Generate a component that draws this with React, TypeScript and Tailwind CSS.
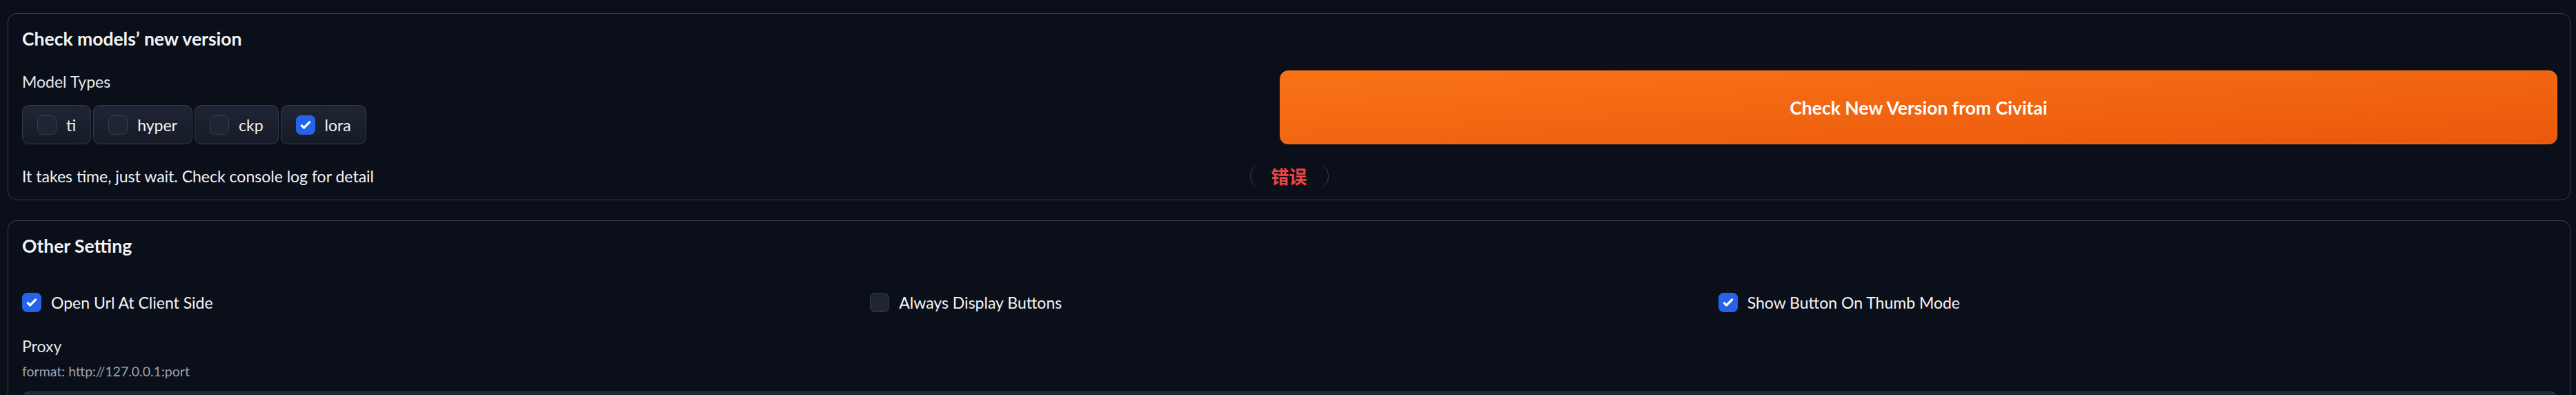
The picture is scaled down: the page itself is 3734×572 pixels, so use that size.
import React from "react";

const CheckMark = () => (
  <svg viewBox="0 0 16 16" className="w-full h-full" fill="white">
    <path d="M12.207 4.793a1 1 0 010 1.414l-5 5a1 1 0 01-1.414 0l-2-2a1 1 0 011.414-1.414L6.5 9.086l4.293-4.293a1 1 0 011.414 0z" />
  </svg>
);

const Box = ({ checked }: { checked: boolean }) =>
  checked ? (
    <span className="w-[28px] h-[28px] rounded-[7px] bg-[#2563eb] border border-[#2563eb] shrink-0">
      <CheckMark />
    </span>
  ) : (
    <span className="w-[28px] h-[28px] rounded-[7px] bg-[#1f2533] border border-[#353c4b] shrink-0" />
  );

const Chip = ({ label, checked }: { label: string; checked: boolean }) => (
  <label className="flex items-center gap-[14px] h-[57px] pl-[21px] pr-[21px] rounded-[10px] border border-[#343b4b] bg-gradient-to-t from-[#161b27] to-[#1f2534]">
    <Box checked={checked} />
    <span className="text-[#f3f4f6]">{label}</span>
  </label>
);

const Option = ({ label, checked }: { label: string; checked: boolean }) => (
  <label className="flex items-center gap-[14px] h-[30px]">
    <Box checked={checked} />
    <span className="text-[#f3f4f6]">{label}</span>
  </label>
);

const Title = ({ children }: { children: React.ReactNode }) => (
  <h3 className="text-[26.5px] leading-[36px] font-bold text-[#f3f4f6]">{children}</h3>
);

export default function App() {
  const types = [
    { label: "ti", checked: false },
    { label: "hyper", checked: false },
    { label: "ckp", checked: false },
    { label: "lora", checked: true },
  ];

  return (
    <div className="min-h-screen bg-[#0b0f19] pt-[19px] pl-[11px] pr-[8px] text-[23px] leading-[30px] font-['Lato','Noto_Sans_CJK_SC',sans-serif]">
      <section className="relative h-[271px] rounded-[13px] border border-[#343b4b] pt-[18px] pl-[20px] pr-[18px]">
        <Title>Check models’ new version</Title>

        <div className="flex gap-[27px] mt-[28px]">
          <div className="flex-1 pt-[1px]">
            <div className="text-[#e5e7eb]">Model Types</div>
            <div className="flex gap-[3px] mt-[19px]">
              {types.map((t) => (
                <Chip key={t.label} label={t.label} checked={t.checked} />
              ))}
            </div>
          </div>
          <button className="w-[1852px] h-[107px] rounded-[12px] border border-[#f97316] bg-gradient-to-br from-[#f97316] to-[#ea580c] text-white text-[26.5px] font-bold">
            Check New Version from Civitai
          </button>
        </div>

        <p className="mt-[31px] text-[#f3f4f6]">It takes time, just wait. Check console log for detail</p>

        <div className="absolute left-1/2 -translate-x-1/2 bottom-[16px] w-[114px] h-[36px] rounded-full border-x border-[#3a4152] flex items-center justify-center">
          <span className="text-[26px] leading-[30px] font-bold text-[#ef4444] font-['Noto_Sans_CJK_SC',sans-serif]">错误</span>
        </div>
      </section>

      <section className="mt-[29px] h-[300px] rounded-t-[13px] border border-b-0 border-[#343b4b] pt-[18px] pl-[20px] pr-[18px]">
        <Title>Other Setting</Title>

        <div className="grid grid-cols-3 gap-[13px] mt-[49px]">
          <Option label="Open Url At Client Side" checked={true} />
          <Option label="Always Display Buttons" checked={false} />
          <Option label="Show Button On Thumb Mode" checked={true} />
        </div>

        <div className="mt-[33px] text-[#e5e7eb]">Proxy</div>
        <div className="mt-[9.5px] text-[19.5px] leading-[24px] text-[#9ca3af]">format: http://127.0.0.1:port</div>
        <div className="mt-[17.5px] h-[52px] rounded-[10px] border border-[#374151] bg-[#1f2533]" />
      </section>
    </div>
  );
}
